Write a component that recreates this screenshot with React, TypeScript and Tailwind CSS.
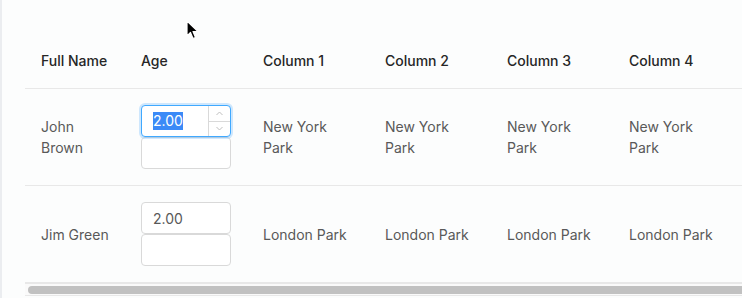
import React from 'react';

const columns = ['Column 1', 'Column 2', 'Column 3', 'Column 4'];

type Row = { name: string; age: string; address: string; focused?: boolean };

const rows: Row[] = [
  { name: 'John Brown', age: '2.00', address: 'New York Park', focused: true },
  { name: 'Jim Green', age: '2.00', address: 'London Park' },
];

const AgeInputs: React.FC<{ value: string; focused?: boolean }> = ({ value, focused }) => (
  <div className="flex flex-col w-[90px]">
    {focused ? (
      <div className="relative h-[32px] rounded-[4px] border border-[#40a9ff] shadow-[0_0_0_2px_rgba(24,144,255,0.2)] bg-white flex">
        <div className="flex-1 flex items-center pl-[11px]">
          <span className="bg-[#3b8af7] text-white leading-[18px]">{value}</span>
        </div>
        <div className="w-[22px] border-l border-[#d9d9d9] flex flex-col text-[#bfbfbf]">
          <div className="flex-1 flex items-center justify-center border-b border-[#d9d9d9]">
            <svg width="7" height="5" viewBox="0 0 7 5" fill="none" stroke="currentColor" strokeWidth="1">
              <path d="M0.5 4 L3.5 1 L6.5 4" />
            </svg>
          </div>
          <div className="flex-1 flex items-center justify-center">
            <svg width="7" height="5" viewBox="0 0 7 5" fill="none" stroke="currentColor" strokeWidth="1">
              <path d="M0.5 1 L3.5 4 L6.5 1" />
            </svg>
          </div>
        </div>
      </div>
    ) : (
      <div className="h-[32px] rounded-[4px] border border-[#d9d9d9] bg-white flex items-center pl-[11px] text-[#595959]">
        {value}
      </div>
    )}
    <div className="h-[32px] rounded-[4px] border border-[#d9d9d9] bg-white" />
  </div>
);

export default function App() {
  return (
    <div
      className="relative w-[742px] h-[298px] overflow-hidden bg-[#fcfdfd] border-l-2 border-[#ebedf0] text-[14px]"
      style={{ fontFamily: 'Inter, "Noto Sans", sans-serif' }}
    >
      <div className="pl-[23px] pt-[34px]">
        <div className="overflow-hidden">
          <table className="border-collapse table-fixed w-[832px]">
            <colgroup>
              <col className="w-[100px]" />
              <col className="w-[122px]" />
              {columns.map(c => (
                <col key={c} className="w-[122px]" />
              ))}
              <col className="w-[122px]" />
            </colgroup>
            <thead>
              <tr className="border-b border-[#e8e8e8]">
                <th className="text-left font-medium text-[#262626] px-[16px] py-[16px] leading-[22px]">Full Name</th>
                <th className="text-left font-medium text-[#262626] px-[16px] py-[16px] leading-[22px]">Age</th>
                {columns.map(c => (
                  <th key={c} className="text-left font-medium text-[#262626] px-[16px] py-[16px] leading-[22px]">{c}</th>
                ))}
                <th />
              </tr>
            </thead>
            <tbody>
              {rows.map((r, i) => (
                <tr key={r.name} className={i === rows.length - 1 ? 'border-b-2 border-[#e8e8e8]' : 'border-b border-[#e8e8e8]'}>
                  <td className="px-[16px] py-[16px] leading-[21px] text-[#595959] align-middle">{r.name}</td>
                  <td className="px-[16px] py-[16px] align-middle">
                    <AgeInputs value={r.age} focused={r.focused} />
                  </td>
                  {columns.map(c => (
                    <td key={c} className="px-[16px] py-[16px] leading-[21px] text-[#595959] align-middle">{r.address}</td>
                  ))}
                  <td />
                </tr>
              ))}
            </tbody>
          </table>
        </div>

        {/* horizontal scrollbar */}
        <div className="h-[12px] bg-[#fafafa] border-b border-[#e8e8e8] flex items-center pl-[3px]">
          <div className="h-[8px] w-full rounded-l-full bg-[#c1c1c1]" />
        </div>
      </div>

      {/* mouse cursor */}
      <svg className="absolute left-[184px] top-[20px]" width="13" height="20" viewBox="0 0 13 20">
        <path d="M1 1 L1 16 L4.5 12.5 L7 18.5 L9.5 17.5 L7 11.5 L12 11.5 Z" fill="#000" stroke="#fff" strokeWidth="1.2" strokeLinejoin="round" />
      </svg>
    </div>
  );
}
